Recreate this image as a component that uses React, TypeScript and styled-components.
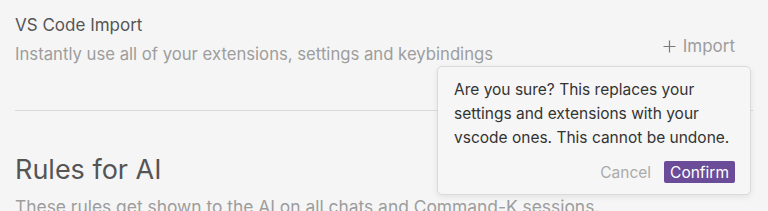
import styled, { createGlobalStyle } from 'styled-components';

const GlobalStyle = createGlobalStyle`
  html, body {
    margin: 0;
    padding: 0;
    background: #f5f5f5;
  }
  body {
    font-family: Inter, "Liberation Sans", sans-serif;
    -webkit-font-smoothing: antialiased;
  }
`;

const PlusIcon = () => (
  <svg width="13" height="13" viewBox="0 0 13 13" fill="none">
    <path d="M6.5 0.5v12M0.5 6.5h12" stroke="#7a7a7a" strokeWidth="1.2" />
  </svg>
);

const App = () => {
  return (
    <Page>
      <GlobalStyle />
      <Section>
        <SettingRow>
          <SettingText>
            <SettingTitle>VS Code Import</SettingTitle>
            <SettingDesc>Instantly use all of your extensions, settings and keybindings</SettingDesc>
          </SettingText>
          <ImportAnchor>
            <ImportButton>
              <PlusIcon />
              Import
            </ImportButton>
            <Popover>
              <PopoverText>
                Are you sure? This replaces your settings and extensions with your vscode ones.
                This cannot be undone.
              </PopoverText>
              <PopoverActions>
                <CancelButton>Cancel</CancelButton>
                <ConfirmButton>Confirm</ConfirmButton>
              </PopoverActions>
            </Popover>
          </ImportAnchor>
        </SettingRow>
      </Section>

      <Divider />

      <Section>
        <SectionTitle>Rules for AI</SectionTitle>
        <SettingDesc $size={17.4}>
          These rules get shown to the AI on all chats and Command-K sessions.
        </SettingDesc>
      </Section>
    </Page>
  );
};

export default App;

const Page = styled.div`
  padding: 14px 15px 0;
  display: flex;
  flex-direction: column;
`;

const Section = styled.div`
  display: flex;
  flex-direction: column;
`;

const SettingRow = styled.div`
  display: flex;
  justify-content: space-between;
  align-items: flex-start;
`;

const SettingText = styled.div`
  display: flex;
  flex-direction: column;
  gap: 7px;
`;

const SettingTitle = styled.div`
  font-size: 17px;
  line-height: 22px;
  color: #555555;
`;

const SettingDesc = styled.div<{ $size?: number }>`
  font-size: ${({ $size }) => $size ?? 16.7}px;
  line-height: 22px;
  color: #9d9d9d;
  white-space: nowrap;
`;

const ImportAnchor = styled.div`
  position: relative;
  padding-top: 21px;
  padding-right: 18px;
`;

const ImportButton = styled.button`
  background: none;
  border: none;
  padding: 0;
  font-family: inherit;
  font-size: 17px;
  line-height: 22px;
  color: #9d9d9d;
  display: flex;
  align-items: center;
  gap: 7px;
`;

const Popover = styled.div`
  position: absolute;
  top: 52px;
  right: 2px;
  width: 314px;
  box-sizing: border-box;
  padding: 11px 12px 11px 16px;
  background: #f6f6f6;
  border: 1px solid #dadada;
  border-radius: 5px;
  box-shadow: 0 2px 6px rgba(0, 0, 0, 0.08);
  z-index: 2;
`;

const PopoverText = styled.p`
  margin: 0;
  font-size: 15.5px;
  line-height: 24px;
  color: #333333;
`;

const PopoverActions = styled.div`
  display: flex;
  justify-content: flex-end;
  align-items: center;
  gap: 13px;
  margin-top: 11px;
  padding-right: 3px;
`;

const CancelButton = styled.button`
  background: none;
  border: none;
  padding: 0;
  font-family: inherit;
  font-size: 15.5px;
  color: #aaaaaa;
`;

const ConfirmButton = styled.button`
  background: #6a4c98;
  border: none;
  border-radius: 2px;
  padding: 0 6px;
  height: 22px;
  font-family: inherit;
  font-size: 15.5px;
  color: #ffffff;
`;

const Divider = styled.hr`
  margin: 45px 0 0;
  border: none;
  border-top: 1px solid #d9d9d9;
`;

const SectionTitle = styled.h2`
  margin: 43px 0 10px;
  font-size: 27px;
  font-weight: 400;
  line-height: 32px;
  color: #555555;
`;
